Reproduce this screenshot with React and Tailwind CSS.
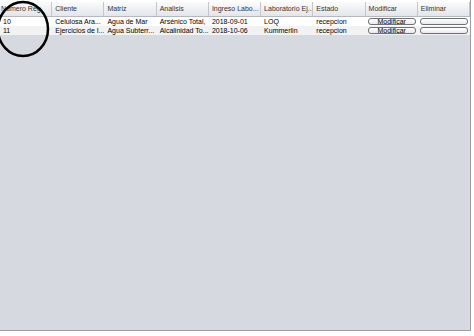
import React from "react";

const cols = ["Numero Reg", "Cliente", "Matriz", "Analisis", "Ingreso Labo...", "Laboratorio Ej...", "Estado", "Modificar", "Eliminar"];
const rows = [
  ["10", "Celulosa Ara...", "Agua de Mar", "Arsénico Total,", "2018-09-01", "LOQ", "recepcion"],
  ["11", "Ejercicios de I...", "Agua Subterr...", "Alcalinidad To...", "2018-10-06", "Kummerlin", "recepcion"],
];

export default function App() {
  return (
    <div className="relative w-[474px] h-[336px] bg-white overflow-hidden" style={{ fontFamily: '"Liberation Sans", Arial, sans-serif' }}>
      <div className="flex flex-col w-[471px] h-[331px] bg-[#d6d9df] border-r border-b border-[#9a9da3]">
        <div className="h-[2px] bg-white" />
        <div className="grid grid-cols-9 h-[15px] bg-gradient-to-b from-[#fbfbfc] to-[#e3e5e9] border-b border-[#b5b8bd]">
          {cols.map((c, i) => (
            <div key={i} className={`flex items-center text-[7px] text-[#333] border-r border-[#c3c6cb] whitespace-nowrap overflow-hidden ${i === 0 ? "pl-[1px]" : "pl-[3px]"}`}>
              {c}
            </div>
          ))}
        </div>
        {rows.map((r, ri) => (
          <div key={ri} className={`grid grid-cols-9 h-[9px] ${ri === 0 ? "bg-white" : "bg-[#f2f2f2]"}`}>
            {r.map((v, i) => (
              <div key={i} className="flex items-center pl-[3px] text-[7px] leading-none text-black whitespace-nowrap overflow-hidden">
                {v}
              </div>
            ))}
            <div className="flex items-center px-[2px]">
              <div className="w-full h-[7px] rounded-[3px] border border-[#6e7074] bg-gradient-to-b from-white to-[#e8e9ec] flex items-center justify-center text-[7px] leading-none text-black">
                Modificar
              </div>
            </div>
            <div className="flex items-center px-[2px]">
              <div className="w-full h-[7px] rounded-[3px] border border-[#6e7074] bg-gradient-to-b from-white to-[#e8e9ec]" />
            </div>
          </div>
        ))}
      </div>
      <svg className="absolute left-0 top-0" width="80" height="70" viewBox="0 0 80 70">
        <ellipse cx="23" cy="29" rx="25" ry="27" fill="none" stroke="black" strokeWidth="2.5" />
      </svg>
    </div>
  );
}
